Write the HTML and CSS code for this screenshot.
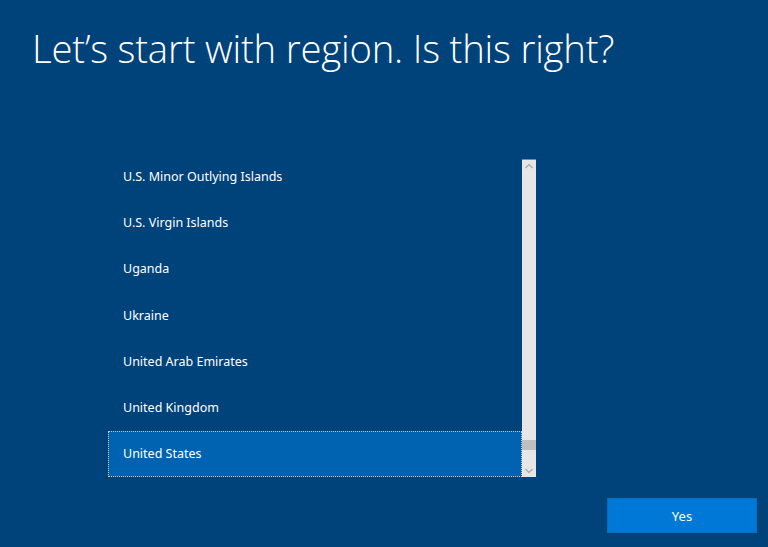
FILE: index.html
```html
<!DOCTYPE html>
<html lang="en">
<head>
<meta charset="utf-8">
<title>Region</title>
<link rel="stylesheet" href="styles.css">
</head>
<body>
<div class="page">
  <h1 class="title">Let’s start with region. Is this right?</h1>
  <div class="picker">
    <div class="list">
      <div class="items">
        <div class="item">U.S. Minor Outlying Islands</div>
        <div class="item">U.S. Virgin Islands</div>
        <div class="item">Uganda</div>
        <div class="item">Ukraine</div>
        <div class="item">United Arab Emirates</div>
        <div class="item">United Kingdom</div>
        <div class="item selected">United States</div>
      </div>
    </div>
    <div class="scrollbar">
      <svg class="arrow" width="14" height="12" viewBox="0 0 14 12"><path d="M3.5 8 L7 4.5 L10.5 8" fill="none" stroke="#a8a8a8" stroke-width="1.2"/></svg>
      <div class="track"><div class="thumb"></div></div>
      <svg class="arrow" width="14" height="12" viewBox="0 0 14 12"><path d="M3.5 4 L7 7.5 L10.5 4" fill="none" stroke="#a8a8a8" stroke-width="1.2"/></svg>
    </div>
  </div>
  <div class="actions">
    <button class="yes">Yes</button>
  </div>
</div>
</body>
</html>
```

FILE: styles.css
```css
html, body {
  margin: 0;
  padding: 0;
  height: 100%;
}
body {
  background: #00437a;
  color: #ffffff;
  font-family: "Open Sans", "Noto Sans", sans-serif;
  overflow: hidden;
}
.page {
  width: 768px;
  height: 547px;
  display: flex;
  flex-direction: column;
}
.title {
  margin: 22px 0 0 32px;
  font-weight: 300;
  font-size: 38.3px;
  line-height: 52px;
  letter-spacing: -0.2px;
}
.picker {
  margin: 85px 0 0 108px;
  display: flex;
  height: 318px;
}
.list {
  width: 414px;
  height: 318px;
  overflow: hidden;
}
.items {
  margin-top: -6px;
}
.item {
  height: 46.33px;
  display: flex;
  align-items: center;
  padding-left: 15px;
  font-family: "Noto Sans", "Open Sans", sans-serif;
  font-size: 12.5px;
  color: #ffffff;
  box-sizing: border-box;
}
.item.selected {
  height: 46px;
  background: #0063b1;
  border: 1px dotted #c8c8c8;
  padding-left: 14px;
}
.scrollbar {
  width: 14px;
  height: 318px;
  background: #e6e6e6;
  border-top: 1px solid #6b8fb4;
  box-sizing: border-box;
  display: flex;
  flex-direction: column;
}
.arrow {
  display: block;
  flex: none;
}
.track {
  flex: 1;
  display: flex;
  flex-direction: column;
  justify-content: flex-end;
  padding-bottom: 15px;
}
.thumb {
  height: 10px;
  background: #bfbfbf;
}
.actions {
  display: flex;
  justify-content: flex-end;
  margin: 21px 11px 0 0;
}
.yes {
  width: 150px;
  height: 35px;
  background: #0078d7;
  border: 1px solid #0a6cc0;
  color: #ffffff;
  font-family: "Noto Sans", "Open Sans", sans-serif;
  font-size: 13px;
  padding: 0;
}
```
